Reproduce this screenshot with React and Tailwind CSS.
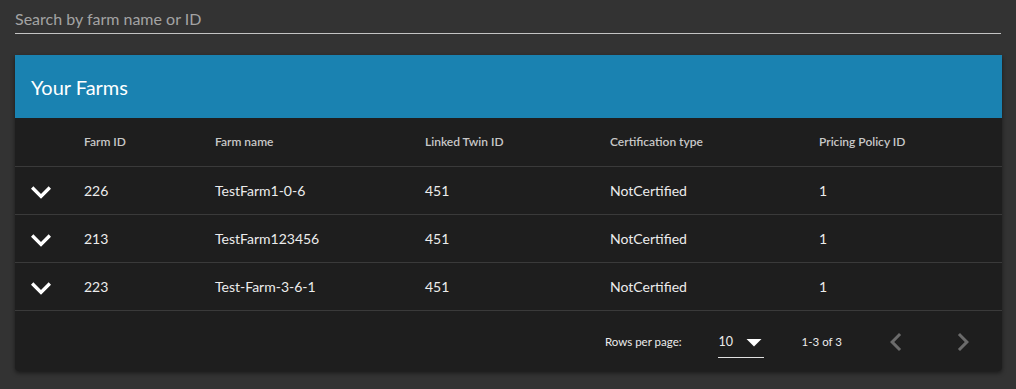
import React from "react";

const farms = [
    { id: "226", name: "TestFarm1-0-6", twin: "451", cert: "NotCertified", policy: "1" },
    { id: "213", name: "TestFarm123456", twin: "451", cert: "NotCertified", policy: "1" },
    { id: "223", name: "Test-Farm-3-6-1", twin: "451", cert: "NotCertified", policy: "1" },
];

const ExpandMore = () => (
    <svg viewBox="0 0 24 24" className="w-[40px] h-[40px] fill-white mt-[3px]">
        <path d="M16.59 8.59 12 13.17 7.41 8.59 6 10l6 6 6-6z" />
    </svg>
);

const App = () => {
    return (
        <div className="min-h-[389px] bg-[#333333] px-[15px] pt-[5px] font-['Lato',sans-serif]">
            {/* Search */}
            <div className="border-b border-[#c4c4c4] h-[29px] flex items-center">
                <input
                    className="w-full bg-transparent outline-none text-[16px] text-[#e0e0e0] placeholder:text-[#a3a3a3]"
                    placeholder="Search by farm name or ID"
                />
            </div>

            {/* Card */}
            <div className="mt-[21px] w-[987px] bg-[#1e1e1e] rounded-b-[4px] shadow-[0_2px_4px_rgba(0,0,0,0.5)] overflow-hidden">
                <div className="h-[63px] bg-[#1a82b1] flex items-center px-[16px]">
                    <h2 className="text-[20px] text-white">Your Farms</h2>
                </div>

                <table className="w-full text-left border-collapse">
                    <thead>
                        <tr className="h-[48px] border-b border-[#3a3a3a] text-[12px] text-[#c8c8c8]">
                            <th className="w-[69px]"></th>
                            <th className="w-[131px] font-semibold">Farm ID</th>
                            <th className="w-[210px] font-semibold">Farm name</th>
                            <th className="w-[185px] font-semibold">Linked Twin ID</th>
                            <th className="w-[209px] font-semibold">Certification type</th>
                            <th className="font-semibold">Pricing Policy ID</th>
                        </tr>
                    </thead>
                    <tbody>
                        {farms.map((f) => (
                            <tr key={f.id} className="h-[48px] border-b border-[#3a3a3a] text-[14px] text-[#ececec]">
                                <td className="pl-[6px]"><ExpandMore /></td>
                                <td className="pt-[1px]">{f.id}</td>
                                <td className="pt-[1px]">{f.name}</td>
                                <td className="pt-[1px]">{f.twin}</td>
                                <td className="pt-[1px]">{f.cert}</td>
                                <td className="pt-[1px]">{f.policy}</td>
                            </tr>
                        ))}
                    </tbody>
                </table>

                {/* Pagination */}
                <div className="h-[60px] pt-[2px] flex items-center text-[11.5px] text-[#ececec]">
                    <span className="ml-[590px]">Rows per page:</span>
                    <div className="ml-[36px] w-[46px] h-[30px] mt-[2px] pl-[1px] border-b border-[#e0e0e0] flex items-center shrink-0">
                        <span className="text-[12.5px]">10</span>
                        <svg viewBox="0 0 24 24" className="w-[36px] h-[36px] fill-white ml-[3px] shrink-0">
                            <path d="M7 10l5 5 5-5z" />
                        </svg>
                    </div>
                    <span className="ml-[38px]">1-3 of 3</span>
                    <div className="ml-[36px] flex items-center gap-[31px]">
                        <svg viewBox="0 0 24 24" className="w-[36px] h-[36px] fill-[#6b6b6b]">
                            <path d="M15.41 7.41 14 6l-6 6 6 6 1.41-1.41L10.83 12z" />
                        </svg>
                        <svg viewBox="0 0 24 24" className="w-[36px] h-[36px] fill-[#6b6b6b]">
                            <path d="M10 6 8.59 7.41 13.17 12l-4.58 4.59L10 18l6-6z" />
                        </svg>
                    </div>
                </div>
            </div>
        </div>
    );
};

export default App;
